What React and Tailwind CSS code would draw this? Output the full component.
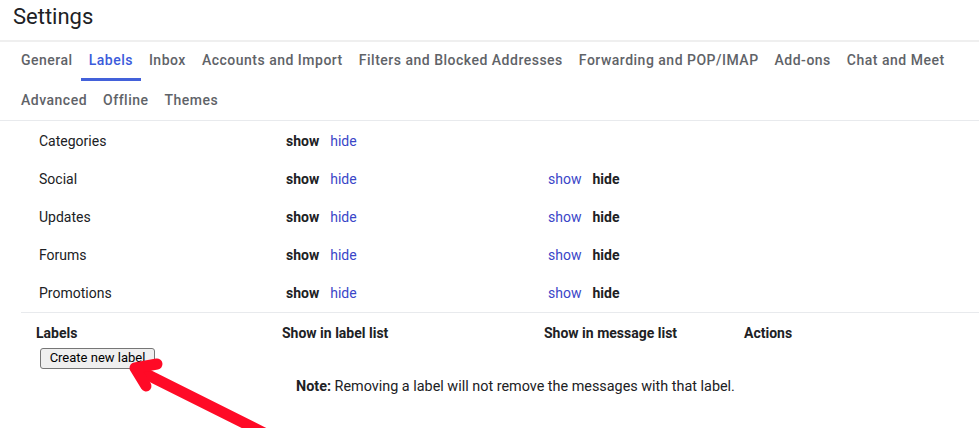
import React from 'react';

const tabsTop = ['General', 'Labels', 'Inbox', 'Accounts and Import', 'Filters and Blocked Addresses', 'Forwarding and POP/IMAP', 'Add-ons', 'Chat and Meet'];
const tabsBottom = ['Advanced', 'Offline', 'Themes'];

const categories = [
  { name: 'Categories', msg: false },
  { name: 'Social', msg: true },
  { name: 'Updates', msg: true },
  { name: 'Forums', msg: true },
  { name: 'Promotions', msg: true },
];

function Tab({ label, active }) {
  return (
    <div className="relative h-[40px] px-2 pb-[4px] flex items-center">
      <span className={active ? 'text-[#3b5bdb]' : 'text-[#5f6368]'}>{label}</span>
      {active && <div className="absolute left-0 right-0 bottom-[1px] h-[3px] bg-[#4361da]" />}
    </div>
  );
}

function Arrow() {
  return (
    <svg className="absolute left-0 top-0 pointer-events-none" width="979" height="428" viewBox="0 0 979 428">
      <g stroke="#ff0a26" strokeWidth="11" strokeLinecap="round" strokeLinejoin="round" fill="none">
        <line x1="140" y1="371" x2="270" y2="436" />
        <polyline points="157,364 135,368 146,386" />
      </g>
    </svg>
  );
}

export default function App() {
  return (
    <div className="relative w-[979px] h-[428px] overflow-hidden bg-white font-['Roboto',sans-serif] text-[#202124]">
      <div className="h-[40px] pl-[13px] pt-[3px] text-[22px] leading-[28px]">Settings</div>
      <div className="border-t-2 border-[#efefef]" />
      <div className="px-[13px] text-[14px] font-medium tracking-[0.5px]">
        <div className="flex">
          {tabsTop.map((t) => <Tab key={t} label={t} active={t === 'Labels'} />)}
        </div>
        <div className="flex">
          {tabsBottom.map((t) => <Tab key={t} label={t} />)}
        </div>
      </div>
      <div className="border-t border-[#e8eaed] mt-[-2px]" />

      <div className="pl-[21px] text-[14px]">
        <div className="pt-[1px]">
          {categories.map((c) => (
            <div key={c.name} className="h-[38px] flex items-center pl-[18px]">
              <div className="w-[247px]">{c.name}</div>
              <div className="w-[262px] flex gap-[11px]">
                <span className="font-bold">show</span>
                <span className="text-[#3a46c8]">hide</span>
              </div>
              {c.msg && (
                <div className="flex gap-[11px]">
                  <span className="text-[#3a46c8]">show</span>
                  <span className="font-bold">hide</span>
                </div>
              )}
            </div>
          ))}
        </div>
        <div className="border-t border-[#e8eaed]" />
        <div className="pl-[15px] pt-[10px] flex font-bold leading-[20px]">
          <div className="w-[246px]">Labels</div>
          <div className="w-[262px]">Show in label list</div>
          <div className="w-[200px]">Show in message list</div>
          <div>Actions</div>
        </div>
        <div className="pl-[19px] pt-[4px]">
          <button className="h-[21px] w-[115px] bg-[#efefef] border border-[#767676] rounded-[3px] text-[13px] text-black leading-[18px] font-['Roboto',sans-serif]">
            Create new label
          </button>
        </div>
        <div className="pl-[275px] pt-[8px] leading-[20px] text-[14.4px]">
          <span className="font-bold">Note:</span> Removing a label will not remove the messages with that label.
        </div>
      </div>
      <Arrow />
    </div>
  );
}
